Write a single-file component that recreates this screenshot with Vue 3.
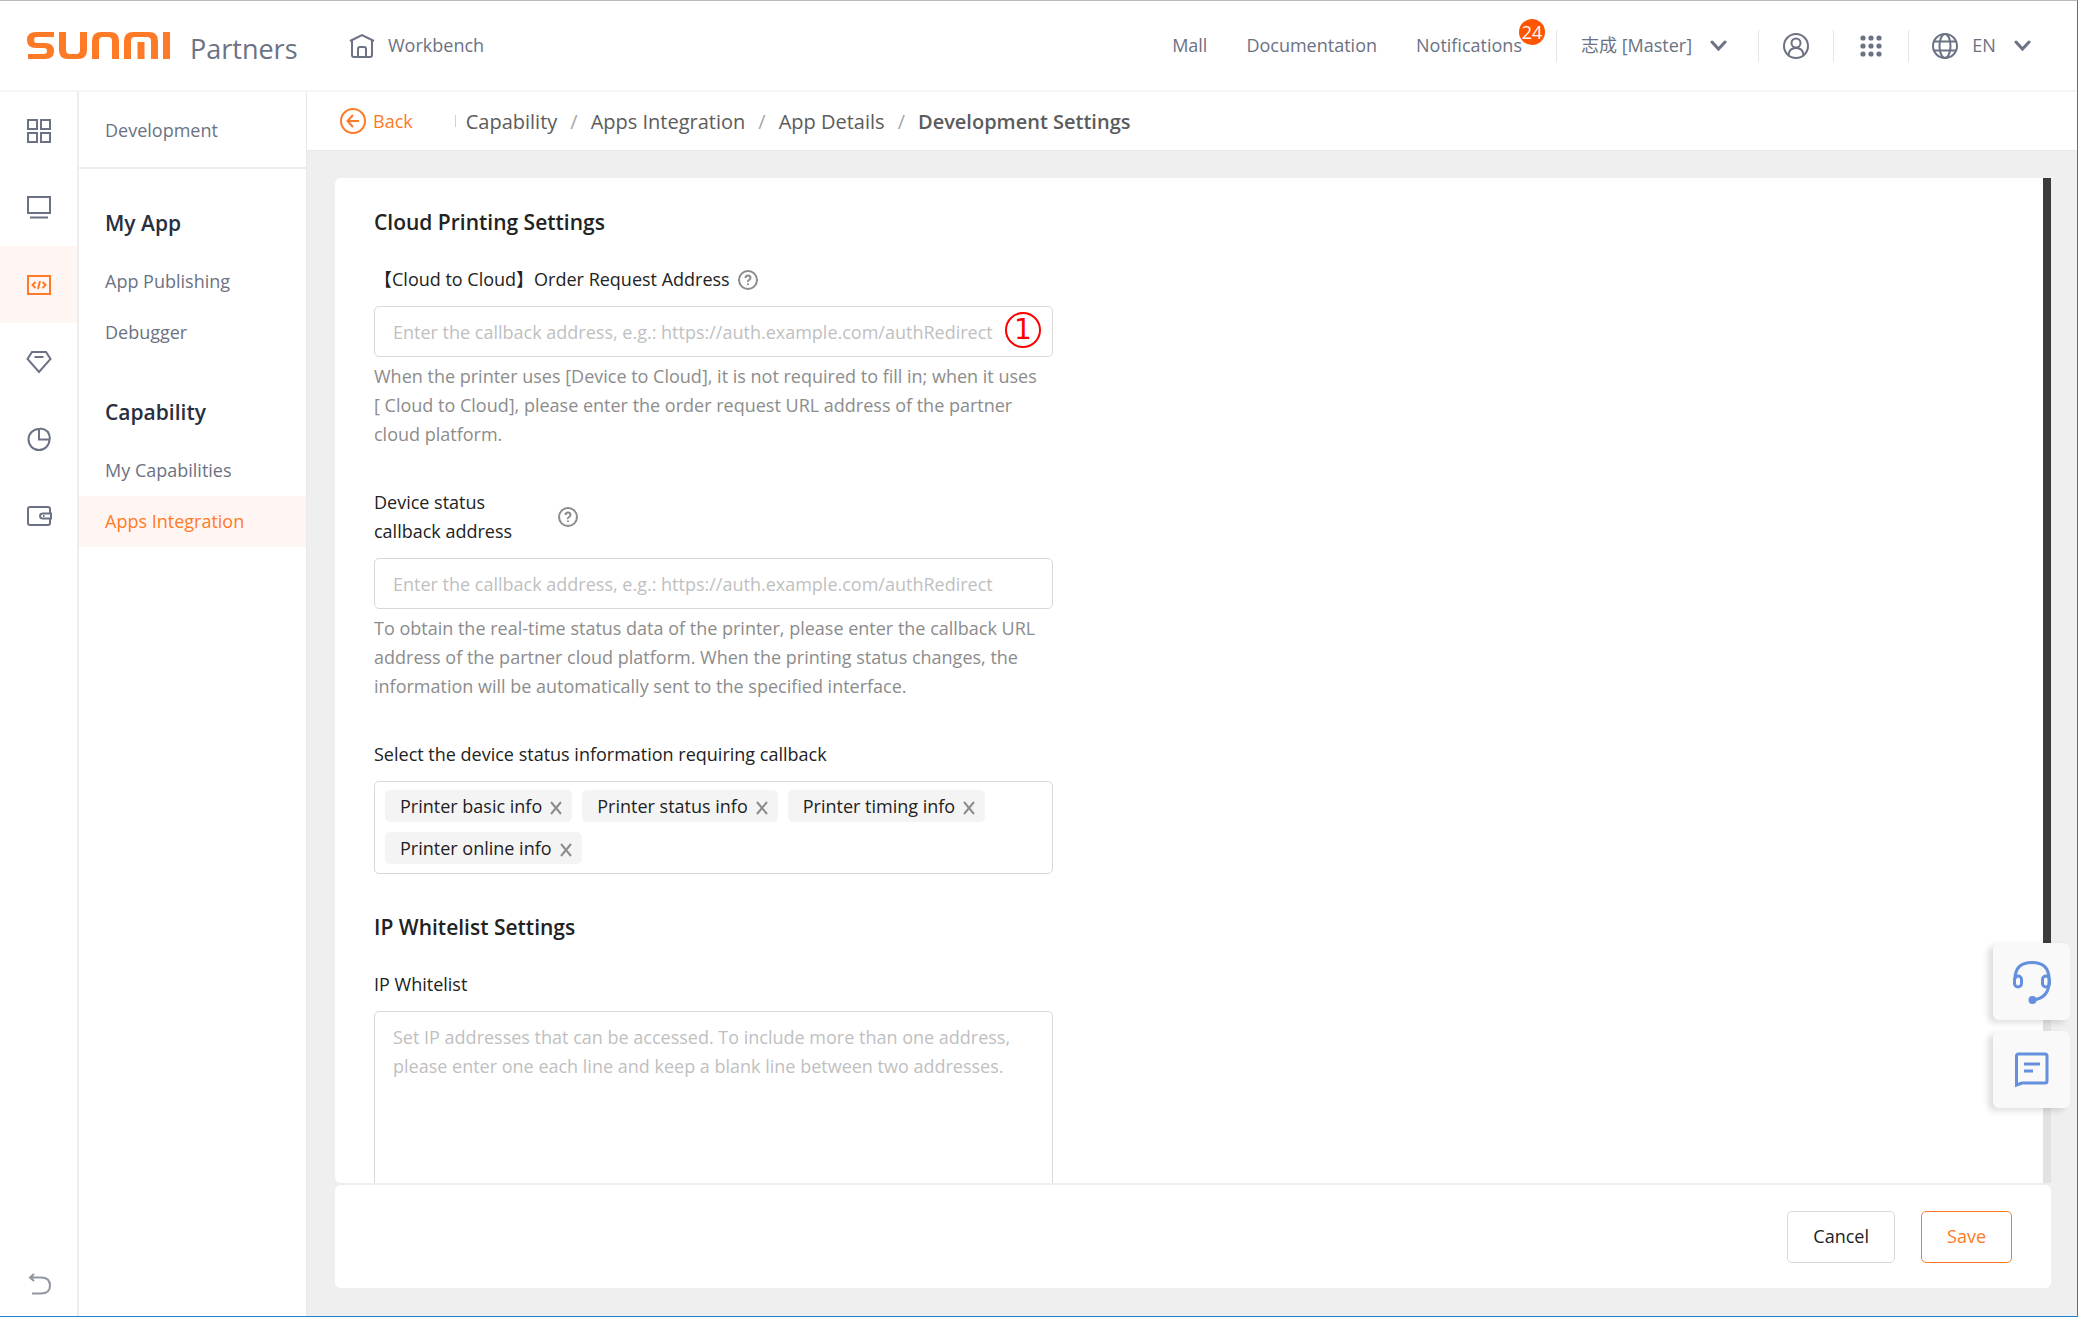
<template>
    <div class="page">
        <header class="topbar">
            <a class="brand" href="#">
                <svg width="144" height="27" viewBox="0 0 144 27" fill="#ff7a26" aria-label="SUNMI">
                    <path d="M27 0V5H10Q7 5 7 8T10 11H18Q27 11 27 19T18 27H1V22H17Q20 22 20 19T17 16H9Q0 16 0 8T9 0Z" />
                    <path d="M32 0H39V18Q39 22 43 22H49Q53 22 53 18V0H60V18Q60 27 51 27H41Q32 27 32 18Z" />
                    <path d="M65 27V9Q65 0 74 0H83Q92 0 92 9V27H85V9Q85 5 81 5H76Q72 5 72 9V27Z" />
                    <path d="M97 27V9Q97 0 106 0H122Q131 0 131 9V27H124V9Q124 5 120 5H108Q104 5 104 9V27Z" />
                    <path d="M110.5 10H117.500V27H110.500ZM136 0H143V27H136Z" />
                </svg>
                <span class="brand-name">Partners</span>
            </a>
            <a class="workbench" href="#">
                <svg width="26" height="26" viewBox="0 0 26 26" class="icon">
                    <path d="M1 8L13 2L25 8M3 7V22Q3 24 5 24H21Q23 24 23 22V7M9 24V16Q9 14 11 14H15Q17 14 17 16V24" />
                </svg>
                Workbench
            </a>
            <nav class="top-links">
                <a href="#">Mall</a>
                <a href="#">Documentation</a>
                <a href="#" class="notice">Notifications<span class="badge">24</span></a>
            </nav>
            <button class="top-cell account" type="button">
                志成 [Master]
                <svg width="17" height="12" viewBox="0 0 17 12" class="icon bold"><path d="M2 2L8.500 9L15 2" /></svg>
            </button>
            <button class="top-cell small" type="button" aria-label="Account">
                <svg width="28" height="28" viewBox="0 0 28 28" class="icon">
                    <circle cx="14" cy="14" r="12" />
                    <circle cx="14" cy="11" r="4.5" />
                    <path d="M6.500 23Q7 16 14 16T21.500 23" />
                </svg>
            </button>
            <button class="top-cell small" type="button" aria-label="Apps">
                <svg width="24" height="24" viewBox="0 0 24 24" fill="#6b7283">
                    <template v-for="y in 3" :key="y">
                        <circle v-for="x in 3" :key="x" :cx="x * 8 - 4" :cy="y * 8 - 4" r="2.6" />
                    </template>
                </svg>
            </button>
            <button class="top-cell lang" type="button">
                <svg width="28" height="28" viewBox="0 0 28 28" class="icon">
                    <circle cx="14" cy="14" r="12" />
                    <ellipse cx="14" cy="14" rx="5.5" ry="12" />
                    <path d="M3 9.500H25M3 18.500H25" />
                </svg>
                <span>EN</span>
                <svg width="17" height="12" viewBox="0 0 17 12" class="icon bold"><path d="M2 2L8.500 9L15 2" /></svg>
            </button>
        </header>

        <div class="body">
            <nav class="rail">
                <a v-for="item in rail" :key="item.name" href="#" :aria-label="item.name" :class="{ active: item.active }">
                    <svg width="26" height="26" viewBox="0 0 26 26" class="icon"><path :d="item.path" /></svg>
                </a>
                <button class="collapse" type="button" aria-label="Collapse menu">
                    <svg width="26" height="26" viewBox="0 0 26 26" class="icon">
                        <path d="M8 3L4 6.500L8 10M4 6.500H15Q24 6.500 24 14.500T15 22.500H6" />
                    </svg>
                </button>
            </nav>

            <aside class="menu">
                <div class="menu-title">Development</div>
                <section v-for="group in menu" :key="group.title">
                    <h2>{{ group.title }}</h2>
                    <a v-for="link in group.links" :key="link" href="#" :class="{ active: link === current }">{{ link }}</a>
                </section>
            </aside>

            <main class="main">
                <div class="crumbs">
                    <a class="back" href="#">
                        <svg width="26" height="26" viewBox="0 0 26 26" class="icon">
                            <circle cx="13" cy="13" r="12" />
                            <path d="M19 13H8M13 7L7.500 13L13 19" />
                        </svg>
                        Back
                    </a>
                    <ol>
                        <li v-for="crumb in crumbs" :key="crumb"><a href="#">{{ crumb }}</a></li>
                        <li class="here">Development Settings</li>
                    </ol>
                </div>

                <form class="workspace" @submit.prevent>
                    <div class="panel">
                        <div class="fields">
                            <h3>Cloud Printing Settings</h3>
                            <div class="field">
                                <div class="label">
                                    <label for="order">【Cloud to Cloud】Order Request Address</label>
                                    <svg width="20" height="20" viewBox="0 0 20 20" class="help"><circle cx="10" cy="10" r="9" /><path d="M7.500 8Q7.500 5.500 10 5.500T12.500 8Q12.500 9 11 10T10 12M10 13.500V15" /></svg>
                                </div>
                                <div class="input-wrap">
                                    <input id="order" v-model="order" type="text" :placeholder="placeholder" />
                                    <span class="marker">1</span>
                                </div>
                                <p>When the printer uses [Device to Cloud], it is not required to fill in; when it uses<br />[ Cloud to Cloud], please enter the order request URL address of the partner<br />cloud platform.</p>
                            </div>
                            <div class="field">
                                <div class="label split">
                                    <label for="status">Device status<br />callback address</label>
                                    <svg width="20" height="20" viewBox="0 0 20 20" class="help"><circle cx="10" cy="10" r="9" /><path d="M7.500 8Q7.500 5.500 10 5.500T12.500 8Q12.500 9 11 10T10 12M10 13.500V15" /></svg>
                                </div>
                                <input id="status" v-model="status" type="text" :placeholder="placeholder" />
                                <p>To obtain the real-time status data of the printer, please enter the callback URL<br />address of the partner cloud platform. When the printing status changes, the<br />information will be automatically sent to the specified interface.</p>
                            </div>
                            <div class="field">
                                <div id="tags-label" class="label">Select the device status information requiring callback</div>
                                <div class="tags" role="group" aria-labelledby="tags-label">
                                    <span v-for="tag in tags" :key="tag" class="tag">
                                        {{ tag }}
                                        <button type="button" :aria-label="'Remove ' + tag" @click="removeTag(tag)">
                                            <svg width="12" height="14" viewBox="0 0 12 14"><path d="M1 1L11 13M11 1L1 13" /></svg>
                                        </button>
                                    </span>
                                </div>
                            </div>
                            <h3>IP Whitelist Settings</h3>
                            <div class="field">
                                <label class="label" for="ips">IP Whitelist</label>
                                <textarea id="ips" v-model="ips" :placeholder="ipHint"></textarea>
                            </div>
                        </div>
                        <div class="scrollbar"><div class="thumb"></div></div>
                    </div>
                    <footer class="actions">
                        <button class="btn" type="button">Cancel</button>
                        <button class="btn primary" type="submit">Save</button>
                    </footer>
                </form>
            </main>
        </div>

        <div class="float">
            <button type="button" aria-label="Support">
                <svg width="40" height="44" viewBox="0 0 40 44" class="icon blue">
                    <path d="M3 19Q3 2.500 20 2.500T37 19V22Q37 38 21 40" />
                    <rect x="2.5" y="16" width="7" height="11" rx="3.5" />
                    <rect x="30.5" y="16" width="7" height="11" rx="3.5" />
                    <circle cx="20.5" cy="40" r="2.5" fill="#6590dd" />
                </svg>
            </button>
            <button type="button" aria-label="Feedback">
                <svg width="36" height="36" viewBox="0 0 36 36" class="icon blue">
                    <path d="M2.500 33V4Q2.500 2 4.500 2H31Q33 2 33 4V29Q33 31 31 31H8ZM10 12H26M10 19H19" />
                </svg>
            </button>
        </div>
    </div>
</template>

<script setup>
import { ref } from 'vue';

const rail = [
    { name: 'Overview', path: 'M2 2H11V11H2ZM15 2H24V11H15ZM2 15H11V24H2ZM15 15H24V24H15Z' },
    { name: 'Devices', path: 'M2 2H24V18H2ZM4 22.500H22' },
    { name: 'Development', active: true, path: 'M2 4H24V22H2ZM9.500 10L6.500 13L9.500 16M16.500 10L19.500 13L16.500 16M14 9L12 17' },
    { name: 'Value', path: 'M6 3H20L24.500 10L13 23L1.500 10ZM8.500 8H17.500' },
    { name: 'Statistics', path: 'M13 3A10.500 10.500 0 1 0 23.500 13.500H13ZM14 2.500Q23.500 3 24 13' },
    { name: 'Wallet', path: 'M24 10V6Q24 4 22 4H4Q2 4 2 6V20Q2 22 4 22H22Q24 22 24 20V16M25 10.500H17Q14 10.500 14 13T17 15.500H25ZM17 13H18.500' }
];

const menu = [
    { title: 'My App', links: ['App Publishing', 'Debugger'] },
    { title: 'Capability', links: ['My Capabilities', 'Apps Integration'] }
];
const current = 'Apps Integration';
const crumbs = ['Capability', 'Apps Integration', 'App Details'];

const placeholder = 'Enter the callback address, e.g.: https://auth.example.com/authRedirect';
const ipHint =
    'Set IP addresses that can be accessed. To include more than one address,\nplease enter one each line and keep a blank line between two addresses.';

const order = ref('');
const status = ref('');
const ips = ref('');
const tags = ref(['Printer basic info', 'Printer status info', 'Printer timing info', 'Printer online info']);

function removeTag(tag) {
    tags.value = tags.value.filter((t) => t !== tag);
}
</script>

<style>
body {
    margin: 0;
}
</style>

<style scoped>
* {
    box-sizing: border-box;
}

.page {
    height: 100vh;
    display: flex;
    flex-direction: column;
    overflow: hidden;
    border: solid #1a80d2;
    border-width: 1px 1px 1px 0;
    border-top-color: #b9b9b9;
    background: #fff;
    color: #6b7283;
    font: 18px/29px 'Open Sans', 'Noto Sans CJK SC', sans-serif;
}

a {
    color: inherit;
    text-decoration: none;
}

button,
input,
textarea {
    font: inherit;
    color: inherit;
}

button {
    border: 0;
    background: none;
    padding: 0;
}

svg {
    display: block;
    flex: none;
}

.icon {
    fill: none;
    stroke: currentColor;
    stroke-width: 2;
}

.icon.bold {
    stroke-width: 3;
    stroke-linecap: round;
}

/* top bar */
.topbar {
    flex: none;
    height: 91px;
    display: flex;
    align-items: center;
    border-bottom: 2px solid #f5f5f7;
}

.brand {
    display: flex;
    align-items: center;
    gap: 19px;
    padding-left: 27px;
    width: 349px;
}

.brand-name {
    font-size: 27px;
    line-height: 40px;
    padding-top: 6px;
}

.workbench {
    display: flex;
    align-items: center;
    gap: 13px;
}

.top-links {
    display: flex;
    gap: 39px;
    margin-left: auto;
    padding-right: 34px;
}

.notice {
    position: relative;
}

.badge {
    position: absolute;
    right: -23px;
    top: -12px;
    width: 26px;
    height: 26px;
    border-radius: 50%;
    background: #ff5500;
    color: #fff;
    line-height: 26px;
    text-align: center;
}

.top-cell {
    height: 32px;
    display: flex;
    align-items: center;
    justify-content: center;
    border-left: 1px solid #e4e5e8;
}

.account {
    width: 202px;
    justify-content: flex-start;
    gap: 18px;
    padding-left: 24px;
}

.small {
    width: 75px;
}

.lang {
    width: 169px;
    gap: 13px;
    padding-right: 24px;
}

.lang span {
    margin-right: 5px;
}

/* left columns */
.body {
    flex: 1;
    min-height: 0;
    display: flex;
}

.rail {
    flex: none;
    width: 79px;
    display: flex;
    flex-direction: column;
    border-right: 2px solid #ededf1;
}

.rail a {
    height: 77px;
    display: flex;
    align-items: center;
    justify-content: center;
}

.rail .active,
.menu .active {
    background: #fff6f3;
    color: #ff7a26;
}

.collapse {
    margin: auto auto 19px;
    color: #9196a3;
}

.menu {
    flex: none;
    width: 228px;
    border-right: 1px solid #e8e8ec;
}

.menu-title {
    height: 77px;
    padding: 24px 26px;
    border-bottom: 2px solid #ededf1;
}

.menu h2 {
    margin: 0;
    padding: 40px 26px 19px;
    color: #282f40;
    font-size: 21px;
    font-weight: 600;
    line-height: 28px;
}

.menu a {
    display: block;
    height: 51px;
    padding: 11px 26px;
}

/* main area */
.main {
    flex: 1;
    min-width: 0;
    display: flex;
    flex-direction: column;
    background: #efefef;
}

.crumbs {
    flex: none;
    height: 59px;
    display: flex;
    align-items: center;
    padding-left: 33px;
    background: #fff;
    border-bottom: 1px solid #e9e9e9;
}

.back {
    display: flex;
    align-items: center;
    gap: 7px;
    color: #ff7a26;
}

.crumbs ol {
    display: flex;
    margin: 0 0 0 42px;
    padding: 0;
    list-style: none;
    color: #5c5c5c;
    font-size: 20px;
}

.crumbs ol::before {
    content: '';
    width: 1px;
    height: 12px;
    margin-right: 10px;
    align-self: center;
    background: #d0d0d0;
}

.crumbs li + li::before {
    content: '/';
    margin: 0 13px;
    color: #a8a8a8;
    font-weight: 400;
}

.here {
    font-weight: 600;
}

.workspace {
    flex: 1;
    min-height: 0;
    display: flex;
    flex-direction: column;
    gap: 2px;
    padding: 27px 26px 28px 28px;
}

.panel {
    flex: 1;
    min-height: 0;
    display: flex;
    overflow: hidden;
    border-radius: 6px 0 0 6px;
    background: #fff;
}

.fields {
    flex: 1;
    padding: 30px 39px 0;
    overflow: hidden;
    color: #222;
}

.fields h3 {
    margin: 0 0 28px;
    font-size: 21px;
    font-weight: 600;
    line-height: 29px;
}

.field {
    width: 679px;
    margin-bottom: 39px;
}

.label {
    display: flex;
    align-items: center;
    gap: 8px;
    margin-bottom: 12px;
}

.split label {
    width: 176px;
}

.help {
    fill: none;
    stroke: #8c8c8c;
    stroke-width: 2;
}

.input-wrap {
    position: relative;
}

input,
textarea,
.tags {
    display: block;
    width: 100%;
    border: 1px solid #d9d9d9;
    border-radius: 5px;
    background: #fff;
}

input {
    height: 51px;
    padding: 0 18px;
}

textarea {
    height: 240px;
    padding: 11px 18px;
    resize: none;
}

::placeholder {
    color: #bfbfbf;
    opacity: 1;
}

.marker {
    position: absolute;
    right: 12px;
    top: 6px;
    width: 36px;
    height: 36px;
    border: 2px solid #f00;
    border-radius: 50%;
    color: #f00;
    font-family: 'DejaVu Sans', sans-serif;
    font-size: 28px;
    line-height: 32px;
    text-align: center;
}

.field p {
    margin: 5px 0 0;
    color: #8c8c8c;
    white-space: nowrap;
}

.tags {
    display: flex;
    flex-wrap: wrap;
    gap: 10px;
    padding: 8px 10px 9px;
}

.tag {
    height: 32px;
    display: flex;
    align-items: center;
    gap: 8px;
    padding: 0 10px 0 15px;
    border-radius: 5px;
    background: #f4f4f4;
}

.tag button {
    display: flex;
    padding-top: 3px;
}

.tag path {
    stroke: #8c8c8c;
    stroke-width: 2;
}

.scrollbar {
    flex: none;
    width: 8px;
    background: #e2e2e2;
}

.thumb {
    height: 80%;
    background: #3c3c3c;
}

.actions {
    flex: none;
    height: 103px;
    display: flex;
    align-items: center;
    justify-content: flex-end;
    gap: 26px;
    padding: 0 39px;
    border-radius: 6px;
    background: #fff;
}

.btn {
    height: 52px;
    padding: 0 25px;
    border: 1px solid #d9d9d9;
    border-radius: 5px;
    color: #222;
}

.primary {
    border-color: #ff7a26;
    color: #ff7a26;
}

/* floating helpers */
.float {
    position: fixed;
    right: 8px;
    bottom: 209px;
    display: grid;
    gap: 11px;
}

.float button {
    width: 77px;
    height: 77px;
    display: flex;
    align-items: center;
    justify-content: center;
    border-radius: 6px;
    background: #f9f9f9;
    box-shadow: -5px 3px 6px rgba(0, 0, 0, 0.13);
}

.blue {
    color: #6590dd;
    stroke-width: 3;
}
</style>
